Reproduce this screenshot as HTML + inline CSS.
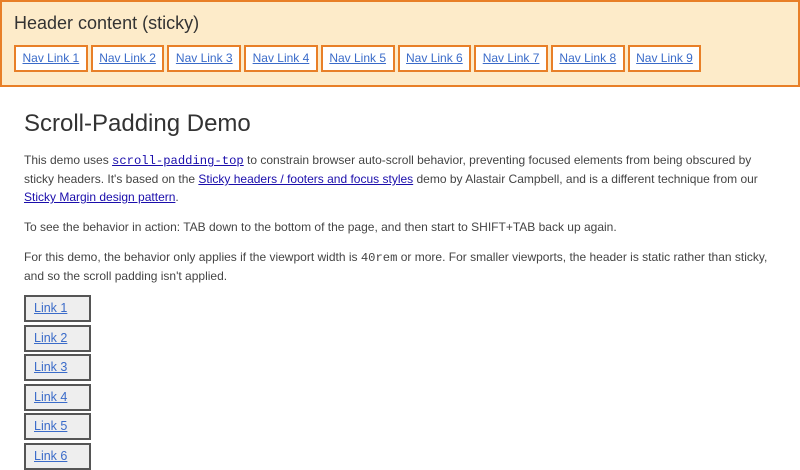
<!DOCTYPE html>
<html><head><style>
body{margin:0;font-family:"Liberation Sans",sans-serif;color:#333;background:#fff;width:800px;height:450px;overflow:hidden}
header{box-sizing:border-box;width:800px;height:87px;background:#fdebc9;border:2px solid #e87f27;padding:0 12px}
header h2{margin:0;padding-top:10px;font-size:18px;font-weight:normal;color:#333;line-height:22px}
nav{margin-top:11px;display:flex;gap:3px}
nav a{box-sizing:border-box;display:block;height:27px;line-height:23px;border:2px solid #e87f27;background:#fff;padding:0 6.5px;color:#3a6bc9;font-size:12px}
main{padding:0 24px}
h1{font-size:24px;font-weight:normal;margin:22px 0 12px;line-height:30px}
p{font-size:12px;line-height:18px;margin:0 0 12px;color:#444}
p a{color:#1a0dab}
code{font-family:"Liberation Mono",monospace;font-size:12.2px}
.l{box-sizing:border-box;display:block;width:67px;height:27px;background:#eee;border:2px solid #555;margin-bottom:2.5px;line-height:23px;padding-left:8px;font-size:12.5px;color:#3a6bc9}
</style></head><body>
<header><h2>Header content (sticky)</h2>
<nav><a href="#">Nav Link 1</a><a href="#">Nav Link 2</a><a href="#">Nav Link 3</a><a href="#">Nav Link 4</a><a href="#">Nav Link 5</a><a href="#">Nav Link 6</a><a href="#">Nav Link 7</a><a href="#">Nav Link 8</a><a href="#">Nav Link 9</a></nav></header>
<main>
<h1>Scroll-Padding Demo</h1>
<p>This demo uses <a href="#"><code>scroll-padding-top</code></a> to constrain browser auto-scroll behavior, preventing focused elements from being obscured by sticky headers. It's based on the <a href="#">Sticky headers / footers and focus styles</a> demo by Alastair Campbell, and is a different technique from our <a href="#">Sticky Margin design pattern</a>.</p>
<p>To see the behavior in action: TAB down to the bottom of the page, and then start to SHIFT+TAB back up again.</p>
<p>For this demo, the behavior only applies if the viewport width is <code>40rem</code> or more. For smaller viewports, the header is static rather than sticky, and so the scroll padding isn't applied.</p>
<div style="margin-top:-2px">
<a class="l" href="#">Link 1</a><a class="l" href="#">Link 2</a><a class="l" href="#">Link 3</a><a class="l" href="#">Link 4</a><a class="l" href="#">Link 5</a><a class="l" href="#">Link 6</a>
</div>
</main>
</body></html>
